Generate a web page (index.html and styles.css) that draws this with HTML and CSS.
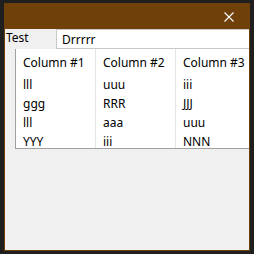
FILE: index.html
```html
<!DOCTYPE html>
<html lang="en">
  <head>
    <meta charset="UTF-8" />
    <title>Test</title>
    <link rel="stylesheet" href="styles.css">
  </head>
  <body>
    <div class="window">
      <div class="titlebar">
        <button class="close" aria-label="Close">
          <svg width="10" height="10" viewBox="0 0 10 10">
            <path d="M0.5 0.5 L9.5 9.5 M9.5 0.5 L0.5 9.5" stroke="#fff" stroke-width="1.1" fill="none" />
          </svg>
        </button>
      </div>
      <div class="field-row">
        <label for="name">Test</label>
        <input type="text" id="name" value="Drrrrr" />
      </div>
      <div class="list-wrap">
        <div class="list">
          <table>
            <thead>
              <tr><th>Column #1</th><th>Column #2</th><th>Column #3</th></tr>
            </thead>
            <tbody>
              <tr><td>lll</td><td>uuu</td><td>iii</td></tr>
              <tr><td>ggg</td><td>RRR</td><td>JJJ</td></tr>
              <tr><td>lll</td><td>aaa</td><td>uuu</td></tr>
              <tr><td>YYY</td><td>iii</td><td>NNN</td></tr>
            </tbody>
          </table>
        </div>
      </div>
    </div>
  </body>
</html>
```

FILE: styles.css
```css
body {
  margin: 0;
  background: #1f1f1f;
  font-family: "Noto Sans", "Open Sans", sans-serif;
  font-size: 12px;
  color: #000;
}
.window {
  margin: 3px 0 0 4px;
  width: 246px;
  height: 248px;
  box-sizing: border-box;
  border: 1px solid #6f400a;
  background: #f0f0f0;
  display: flex;
  flex-direction: column;
}
.titlebar {
  height: 25px;
  background: #6f400a;
  display: flex;
  justify-content: flex-end;
  align-items: center;
}
.close {
  width: 30px;
  height: 25px;
  margin-right: 5px;
  padding: 0;
  border: none;
  background: none;
  display: flex;
  align-items: center;
  justify-content: center;
}
.field-row {
  display: flex;
  height: 20px;
}
.field-row label {
  width: 50px;
  line-height: 16px;
  padding-top: 1px;
  padding-left: 1px;
}
.field-row input {
  flex: 1;
  min-width: 0;
  height: 20px;
  box-sizing: border-box;
  margin: 0;
  border: 1px solid #c8c8c8;
  border-right: none;
  padding: 0 0 0 5px;
  font: inherit;
  font-size: 12px;
  color: #000;
  background: #fff;
  outline: none;
}
.list-wrap {
  padding-left: 10px;
}
.list {
  height: 99px;
  overflow: hidden;
  background: #fff;
  border-left: 1px solid #a0a0a0;
  border-bottom: 1px solid #a0a0a0;
}
table {
  border-collapse: collapse;
  table-layout: fixed;
  width: 240px;
}
th, td {
  width: 72px;
  padding: 0 0 0 7px;
  text-align: left;
  font-weight: normal;
  white-space: nowrap;
  overflow: hidden;
  border-right: 1px solid #e5e5e5;
}
th {
  height: 25px;
  padding-top: 1px;
}
td {
  height: 19px;
}
```
